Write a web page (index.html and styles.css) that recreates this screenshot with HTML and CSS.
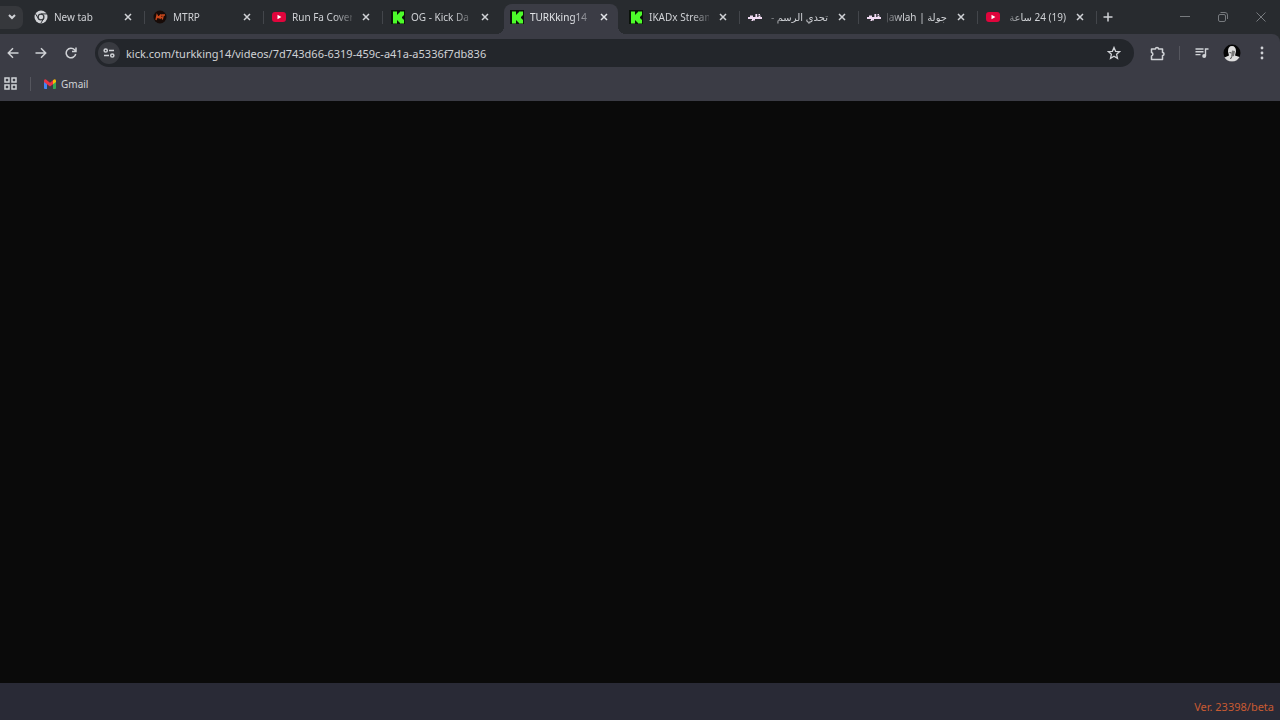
FILE: index.html
```html
<!DOCTYPE html>
<html lang="en">
<head>
    <meta charset="UTF-8">
    <meta name="viewport" content="width=device-width, initial-scale=1.0">
    <title>TURKking14</title>
    <link rel="stylesheet" href="styles.css">
</head>
<body>
    <svg class="sprite" aria-hidden="true">
        <symbol id="close" viewBox="0 0 8 8"><path d="M1 1l6 6M7 1L1 7" stroke="currentColor" stroke-width="1.5"/></symbol>
        <symbol id="youtube" viewBox="0 0 14 12">
            <rect y="1" width="14" height="10" rx="3" fill="#e0053c"/>
            <path d="M5.5 3.8v4.4L9.4 6z" fill="#fff"/>
        </symbol>
        <symbol id="kick" viewBox="0 0 14 14">
            <rect width="14" height="14" fill="#0b120b"/>
            <path d="M2 1.500h4v3h1v-1h1v-1h1v-1h4v4h-1v1h-1v2h1v1h1v4H9v-1H8v-1H7v-1H6v3H2z" fill="#4dfb2a"/>
        </symbol>
        <symbol id="jawlah" viewBox="0 0 14 8">
            <path d="M0 5h14M2 3.500h3M4 6.500h3M8.300 1v4M10.500 3.500h2" fill="none" stroke="#f0daf2" stroke-width="1.800"/>
            <path d="M3.500 7.500h1.500M10.500 1.500h1.500" stroke="#f0daf2" stroke-width="1"/>
        </symbol>
    </svg>

    <header class="browser">
        <div class="tab-strip">
            <button class="tab-search" aria-label="Search tabs">
                <svg width="8" height="6" viewBox="0 0 8 6"><path d="M1 1l3 3 3-3" fill="none" stroke="currentColor" stroke-width="2"/></svg>
            </button>
            <nav class="tabs">
                <div class="tab">
                    <svg class="favicon" viewBox="0 0 14 14">
                        <circle cx="7" cy="7" r="6.500" fill="#d2d4d8"/>
                        <circle cx="7" cy="7" r="2.900" fill="#d2d4d8" stroke="#34373b" stroke-width="1.300"/>
                        <path d="M7 3.900h6M4.300 8.500l-3-5M9.700 8.500l-3 5" stroke="#34373b"/>
                    </svg>
                    <a class="title" href="#">New tab</a>
                    <button class="close" aria-label="Close tab"><svg><use href="#close"/></svg></button>
                </div>
                <div class="tab">
                    <svg class="favicon" viewBox="0 0 14 14">
                        <circle cx="7" cy="7" r="6.500" fill="#170b08"/>
                        <path d="M3 10l1-5 1.500 2.500L8 4.500 7 9M8.500 5H12M10.300 5l-1 4.500M4 7.500h5" fill="none" stroke="#c8481c" stroke-width="1.300"/>
                    </svg>
                    <a class="title" href="#">MTRP</a>
                    <button class="close" aria-label="Close tab"><svg><use href="#close"/></svg></button>
                </div>
                <div class="tab">
                    <svg class="favicon"><use href="#youtube"/></svg>
                    <a class="title" href="#">Run Fa Cover</a>
                    <button class="close" aria-label="Close tab"><svg><use href="#close"/></svg></button>
                </div>
                <div class="tab before-active">
                    <svg class="favicon"><use href="#kick"/></svg>
                    <a class="title" href="#">OG - Kick Da</a>
                    <button class="close" aria-label="Close tab"><svg><use href="#close"/></svg></button>
                </div>
                <div class="tab active">
                    <svg class="favicon"><use href="#kick"/></svg>
                    <a class="title" href="#" aria-current="page">TURKking14</a>
                    <button class="close" aria-label="Close tab"><svg><use href="#close"/></svg></button>
                </div>
                <div class="tab">
                    <svg class="favicon"><use href="#kick"/></svg>
                    <a class="title" href="#">IKADx Stream</a>
                    <button class="close" aria-label="Close tab"><svg><use href="#close"/></svg></button>
                </div>
                <div class="tab">
                    <svg class="favicon"><use href="#jawlah"/></svg>
                    <a class="title" href="#" dir="rtl">تحدي الرسم -</a>
                    <button class="close" aria-label="Close tab"><svg><use href="#close"/></svg></button>
                </div>
                <div class="tab">
                    <svg class="favicon"><use href="#jawlah"/></svg>
                    <a class="title" href="#" dir="rtl">جولة | Jawlah</a>
                    <button class="close" aria-label="Close tab"><svg><use href="#close"/></svg></button>
                </div>
                <div class="tab">
                    <svg class="favicon"><use href="#youtube"/></svg>
                    <a class="title" href="#" dir="rtl">(19) 24 ساعة</a>
                    <button class="close" aria-label="Close tab"><svg><use href="#close"/></svg></button>
                </div>
            </nav>
            <button class="new-tab" aria-label="New tab">
                <svg width="10" height="10" viewBox="0 0 10 10"><path d="M5 0.500v9M0.500 5h9" stroke="currentColor" stroke-width="1.500"/></svg>
            </button>
            <div class="window-buttons">
                <button aria-label="Minimize"><svg width="10" height="10" viewBox="0 0 10 10"><path d="M0 4.500h10" stroke="currentColor"/></svg></button>
                <button aria-label="Restore"><svg width="10" height="10" viewBox="0 0 10 10"><path d="M0.500 4q0-1.500 1.500-1.500h4q1.500 0 1.500 1.500v4q0 1.500-1.500 1.500H2Q0.500 9.500 0.500 8zM2.500 0.500H7q2.500 0 2.500 2.500v4" fill="none" stroke="currentColor"/></svg></button>
                <button aria-label="Close window"><svg width="10" height="10" viewBox="0 0 10 10"><path d="M0.500 0.500l9 9M9.500 0.500l-9 9" stroke="currentColor"/></svg></button>
            </div>
        </div>

        <div class="toolbar">
            <div class="history">
                <button aria-label="Back"><svg width="12" height="12" viewBox="0 0 12 12"><path d="M11.500 6H1.500M6 1.300L1.300 6 6 10.700" fill="none" stroke="currentColor" stroke-width="1.500"/></svg></button>
                <button aria-label="Forward"><svg width="12" height="12" viewBox="0 0 12 12"><path d="M0.500 6h10M6 1.300L10.700 6 6 10.700" fill="none" stroke="currentColor" stroke-width="1.500"/></svg></button>
                <button aria-label="Reload"><svg width="12" height="12" viewBox="0 0 12 12"><path d="M10.700 7A4.800 4.800 0 1 1 9.600 2.800L11 4.300M11 0.500v4H7" fill="none" stroke="currentColor" stroke-width="1.500"/></svg></button>
            </div>
            <div class="address">
                <button class="site-info" aria-label="Site information">
                    <svg width="12" height="10" viewBox="0 0 12 10"><g fill="none" stroke="currentColor" stroke-width="1.500"><circle cx="2.700" cy="2.500" r="1.600"/><path d="M6 2.500h5M1 7.500h5"/><circle cx="9.300" cy="7.500" r="1.600"/></g></svg>
                </button>
                <input class="url" type="text" aria-label="Address" value="kick.com/turkking14/videos/7d743d66-6319-459c-a41a-a5336f7db836">
                <button class="star" aria-label="Bookmark this tab">
                    <svg width="14" height="14" viewBox="0 0 14 14"><path d="M7 1.500l1.600 3.800 4.100.3-3.100 2.700.9 4L7 10.200l-3.500 2.100.9-4-3.100-2.700 4.100-.3z" fill="none" stroke="currentColor" stroke-width="1.300"/></svg>
                </button>
            </div>
            <button class="tool" aria-label="Extensions">
                <svg width="15" height="15" viewBox="0 0 15 15"><path d="M1.500 3h4a1.500 1.500 0 0 1 3 0h4v3.500a1.500 1.500 0 0 1 0 3v4h-11V10a1.800 1.800 0 0 0 0-3.500z" fill="none" stroke="currentColor" stroke-width="1.500" stroke-linejoin="round"/></svg>
            </button>
            <span class="divider"></span>
            <button class="tool" aria-label="Media controls">
                <svg width="14" height="12" viewBox="0 0 14 12"><path d="M0.500 2h8M0.500 4.800h8M0.500 7.600h5M10.500 9V2h3" fill="none" stroke="currentColor" stroke-width="1.400"/><circle cx="9.200" cy="9" r="2" fill="currentColor"/></svg>
            </button>
            <button class="tool" aria-label="Profile">
                <svg width="18" height="18" viewBox="0 0 18 18">
                    <circle cx="9" cy="9" r="8.500" fill="#060606"/>
                    <path d="M5 7.500Q5 2 9 2t4 5.500l-1 4 4.500 1.500q-2.500 4.500-7.500 4.500T1.500 13.500L6 11.500z" fill="#dedede"/>
                    <path d="M9 6.500l3 .5-1 5-3 1z" fill="#777"/>
                    <path d="M6.500 8.500l2 .5M8.500 13l-1 2" fill="none" stroke="#444"/>
                </svg>
            </button>
            <button class="tool" aria-label="Menu">
                <svg width="4" height="14" viewBox="0 0 4 14" fill="currentColor"><circle cx="2" cy="2" r="1.400"/><circle cx="2" cy="7" r="1.400"/><circle cx="2" cy="12" r="1.400"/></svg>
            </button>
        </div>

        <div class="bookmarks">
            <button class="apps" aria-label="Apps">
                <svg width="13" height="13" viewBox="0 0 13 13"><path d="M1 1h4v4H1zM8 1h4v4H8zM1 8h4v4H1zM8 8h4v4H8z" fill="none" stroke="currentColor" stroke-width="1.500"/></svg>
            </button>
            <span class="divider"></span>
            <a class="bookmark" href="#">
                <svg width="12" height="10" viewBox="0 0 12 10">
                    <path d="M0 2.500l3 2V10H1Q0 10 0 9z" fill="#4285f4"/>
                    <path d="M12 2.500l-3 2V10h2q1 0 1-1z" fill="#34a853"/>
                    <path d="M9 1.300l1-.8q2-.8 2 1.500v1L9 5.200z" fill="#fbbc04"/>
                    <path d="M0 3V2Q0-.3 2 .5l4 3.200 3-2.400v3.900L6 7.500 3 5.200z" fill="#ea3345"/>
                </svg>
                Gmail
            </a>
        </div>
    </header>

    <main class="page"></main>

    <footer class="status">Ver. 23398/beta</footer>
</body>
</html>
```

FILE: styles.css
```css
* {
    box-sizing: border-box;
}
body {
    margin: 0;
    min-height: 100vh;
    display: flex;
    flex-direction: column;
    background: #0a0a0a;
    color: #d0d2d6;
    font-family: "Noto Sans", "Open Sans", "DejaVu Sans", sans-serif;
    font-size: 10px;
}
button {
    display: flex;
    align-items: center;
    justify-content: center;
    padding: 0;
    border: none;
    background: none;
    color: inherit;
    cursor: pointer;
}
a {
    color: inherit;
    text-decoration: none;
}
.sprite {
    display: none;
}
.browser {
    background: #282b2f;
}

/* Tabs */
.tab-strip {
    display: flex;
    align-items: center;
    height: 34px;
}
.tab-search {
    width: 23px;
    height: 23px;
    margin-right: 3px;
    border-radius: 0 7px 7px 0;
    background: #36383c;
}
.tabs {
    display: grid;
    grid-template-columns: repeat(9, minmax(0, 1fr));
    flex: 0 1 1071px;
    min-width: 0;
    align-self: stretch;
    padding-top: 4px;
}
.tab {
    display: flex;
    align-items: center;
    padding: 0 9px 4px 8px;
    background: linear-gradient(#43464b, #43464b) right 7px / 1px 13px no-repeat;
}
.tab.before-active {
    background: none;
}
.tab.active {
    position: relative;
    margin: 0 3px 0 2px;
    padding: 0 6px 4px 6px;
    border-radius: 8px 8px 0 0;
    background: #3b3c45;
    color: #e2e4e8;
}
.tab.active::before,
.tab.active::after {
    content: "";
    position: absolute;
    bottom: 0;
    width: 8px;
    height: 8px;
}
.tab.active::before {
    right: 100%;
    background: radial-gradient(circle at 0 0, transparent 8px, #3b3c45 8px);
}
.tab.active::after {
    left: 100%;
    background: radial-gradient(circle at 100% 0, transparent 8px, #3b3c45 8px);
}
.favicon {
    flex: none;
    width: 14px;
    height: 14px;
    margin-right: 6px;
}
.title {
    flex: 1;
    min-width: 0;
    white-space: nowrap;
    line-height: 18px;
    mask-image: linear-gradient(to right, #000 70%, transparent 110%);
}
.title[dir="rtl"] {
    mask-image: linear-gradient(to left, #000 75%, transparent 110%);
}
.close {
    flex: none;
    width: 16px;
    height: 16px;
    margin-left: 6px;
}
.close svg {
    width: 8px;
    height: 8px;
}
.new-tab {
    width: 22px;
    height: 22px;
}
.window-buttons {
    display: flex;
    margin-left: auto;
    color: #777a7e;
}
.window-buttons button {
    width: 38px;
    height: 32px;
}

/* Address bar */
.toolbar {
    display: flex;
    align-items: center;
    height: 38px;
    padding-right: 9px;
    border-radius: 0 8px 0 0;
    background: #3b3c45;
}
.history {
    display: flex;
    margin-right: 9px;
}
.history button {
    width: 30px;
    height: 28px;
}
.history button:first-child {
    width: 26px;
}
.address {
    display: flex;
    flex: 1;
    align-items: center;
    height: 28px;
    padding: 0 10px 0 3px;
    border-radius: 14px;
    background: #23262b;
}
.site-info {
    width: 22px;
    height: 22px;
    border-radius: 50%;
    background: #383a40;
}
.url {
    flex: 1;
    min-width: 0;
    padding: 0 6px;
    border: none;
    outline: none;
    background: none;
    color: inherit;
    font: inherit;
    font-size: 11px;
}
.star {
    width: 20px;
    height: 20px;
}
.tool {
    width: 30px;
    height: 28px;
}
.tool:last-child {
    margin-right: -6px;
}
.address + .tool {
    margin: 0 7px 0 8px;
}
.divider {
    width: 1px;
    height: 14px;
    background: #55565e;
}
.toolbar .divider {
    margin-right: 7px;
}

/* Bookmarks */
.bookmarks {
    display: flex;
    align-items: center;
    height: 29px;
    padding: 0 4px 6px;
    background: #3b3c45;
}
.apps {
    margin-right: 13px;
}
.bookmark {
    display: flex;
    align-items: center;
    gap: 5px;
    margin-left: 13px;
}

.page {
    flex: 1;
}
.status {
    height: 37px;
    padding: 15px 6px 0;
    background: #292a36;
    color: #c85a32;
    font-size: 11px;
    line-height: 17px;
    text-align: right;
}
```
